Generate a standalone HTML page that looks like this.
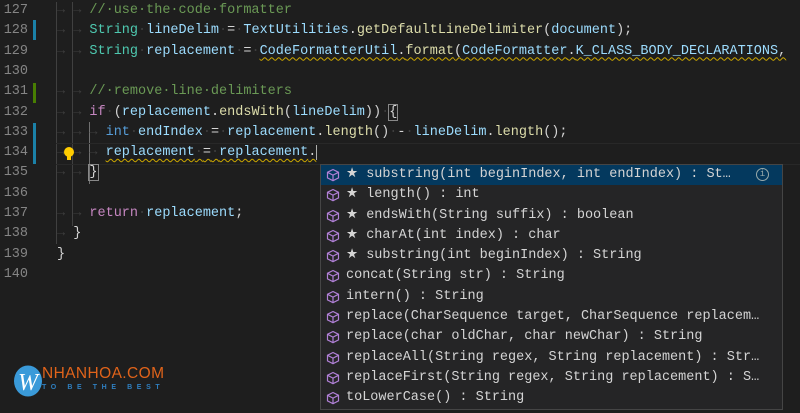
<!DOCTYPE html>
<html><head><style>
body{margin:0;width:800px;height:411px;background:#1e1e1e;overflow:hidden;position:relative;font-family:"Liberation Mono",monospace;font-size:13.5px}
.ln{position:absolute;left:0;width:28px;text-align:right;color:#858585;height:20.3px;line-height:20.3px}
.c{position:absolute;left:57px;white-space:pre;color:#d4d4d4;height:20.3px;line-height:20.3px}
.d{color:#3e3e3e}
.cm{color:#6a9955}.ty{color:#4ec9b0}.v{color:#9cdcfe}.f{color:#dcdcaa}.k{color:#c586c0}.kw{color:#569cd6}
.sq{text-decoration:underline wavy #cca700;text-underline-offset:3px;text-decoration-thickness:1px}
.bar{position:absolute;left:33px;width:3px;height:20px}
.g{position:absolute;width:1px;background:#404040}
#sug{position:absolute;left:320px;top:162px;width:461px;height:244px;background:#252526;border:1px solid #454545}
.r{height:20.3px;line-height:20.3px;white-space:pre;color:#d4d4d4;position:relative;padding-left:25px}
.r svg{position:absolute;left:5px;top:3px}
.sel{background:#04395e}
#ed{position:absolute;left:0;top:2px;width:800px;height:411px}
</style></head><body>
<div id="ed">
<div class="g" style="left:56px;top:0;height:242px"></div>
<div class="g" style="left:72px;top:0;height:224px"></div>
<div class="g" style="left:89px;top:120px;height:62px;background:#707070"></div>
<div style="position:absolute;left:56px;top:141px;width:744px;height:20px;border-top:1px solid #282828;border-bottom:1px solid #282828"></div>
<div class="bar" style="top:18px;background:#1b81a8;height:20px"></div>
<div class="bar" style="top:81px;background:#487e02"></div>
<div class="bar" style="top:121px;background:#1b81a8;height:41px"></div>

<div class="ln" style="top:-1px">127</div><div class="c" style="top:-1px"><span class="d">→ → </span><span class="cm">//·use·the·code·formatter</span></div>
<div class="ln" style="top:19.3px">128</div><div class="c" style="top:19.3px"><span class="d">→ → </span><span class="ty">String</span><span class="d">·</span><span class="v">lineDelim</span><span class="d">·</span>=<span class="d">·</span><span class="v">TextUtilities</span>.<span class="f">getDefaultLineDelimiter</span>(<span class="v">document</span>);</div>
<div class="ln" style="top:39.6px">129</div><div class="c" style="top:39.6px"><span class="d">→ → </span><span class="ty">String</span><span class="d">·</span><span class="v">replacement</span><span class="d">·</span>=<span class="d">·</span><span class="sq"><span class="v">CodeFormatterUtil</span>.<span class="f">format</span>(<span class="v">CodeFormatter</span>.<span class="v">K_CLASS_BODY_DECLARATIONS</span>,</span></div>
<div class="ln" style="top:59.9px">130</div>
<div class="ln" style="top:80.2px">131</div><div class="c" style="top:80.2px"><span class="d">→ → </span><span class="cm">//·remove·line·delimiters</span></div>
<div class="ln" style="top:100.5px">132</div><div class="c" style="top:100.5px"><span class="d">→ → </span><span class="k">if</span><span class="d">·</span>(<span class="v">replacement</span>.<span class="f">endsWith</span>(<span class="v">lineDelim</span>))<span class="d">·</span><span style="outline:1px solid #888">{</span></div>
<div class="ln" style="top:120.8px">133</div><div class="c" style="top:120.8px"><span class="d">→ → → </span><span class="kw">int</span><span class="d">·</span><span class="v">endIndex</span><span class="d">·</span>=<span class="d">·</span><span class="v">replacement</span>.<span class="f">length</span>()<span class="d">·</span>-<span class="d">·</span><span class="v">lineDelim</span>.<span class="f">length</span>();</div>
<div class="ln" style="top:141.1px">134</div><div class="c" style="top:141.1px"><span class="d">→ → → </span><span class="sq"><span class="v">replacement</span><span class="d">·</span>=<span class="d">·</span><span class="v">replacement</span>.</span><span style="border-left:1px solid #aeafad"></span></div>
<svg style="position:absolute;left:62px;top:144px" width="14" height="16" viewBox="0 0 14 16"><circle cx="7" cy="6" r="5" fill="#ffcc00"/><rect x="5" y="10" width="4" height="4" fill="#ffcc00"/></svg>
<div class="ln" style="top:161.4px">135</div><div class="c" style="top:161.4px"><span class="d">→ → </span><span style="outline:1px solid #888">}</span></div>
<div class="ln" style="top:181.7px">136</div>
<div class="ln" style="top:202px">137</div><div class="c" style="top:202px"><span class="d">→ → </span><span class="k">return</span><span class="d">·</span><span class="v">replacement</span>;</div>
<div class="ln" style="top:222.3px">138</div><div class="c" style="top:222.3px"><span class="d">→ </span>}</div>
<div class="ln" style="top:242.6px">139</div><div class="c" style="top:242.6px">}</div>
<div class="ln" style="top:262.9px">140</div>

<div id="sug">
<div class="r sel">★ substring(int beginIndex, int endIndex) : St…<span style="position:absolute;left:435px;top:3px;width:11px;height:11px;border:1px solid #9aa;border-radius:50%;font-size:9px;line-height:11px;text-align:center;color:#9aa">i</span></div>
<div class="r">★ length() : int</div>
<div class="r">★ endsWith(String suffix) : boolean</div>
<div class="r">★ charAt(int index) : char</div>
<div class="r">★ substring(int beginIndex) : String</div>
<div class="r">concat(String str) : String</div>
<div class="r">intern() : String</div>
<div class="r">replace(CharSequence target, CharSequence replacem…</div>
<div class="r">replace(char oldChar, char newChar) : String</div>
<div class="r">replaceAll(String regex, String replacement) : Str…</div>
<div class="r">replaceFirst(String regex, String replacement) : S…</div>
<div class="r">toLowerCase() : String</div>
</div>
</div>
<script>
document.querySelectorAll('#sug .r').forEach(function(r){r.insertAdjacentHTML('afterbegin','<svg width="14" height="14" viewBox="0 0 14 14" fill="none" stroke="#b180d7" stroke-width="1.2"><path d="M7 1.5L12.5 4.3V9.9L7 12.7L1.5 9.9V4.3Z"/><path d="M1.5 4.3L7 7.1L12.5 4.3M7 7.1V12.7"/></svg>');});
</script>

<svg style="position:absolute;left:13px;top:365px" width="30" height="32"><ellipse cx="15" cy="16" rx="14" ry="15.5" fill="#3a9ad9"/><text x="15" y="25" font-family="Liberation Serif" font-style="italic" font-size="24" fill="#fff" text-anchor="middle">W</text></svg>
<div style="position:absolute;left:42px;top:365px;font-family:'Liberation Sans',sans-serif;font-size:15.5px;color:#e0631a;letter-spacing:0.4px">NHANHOA.COM</div>
<div style="position:absolute;left:42px;top:384px;font-family:'Liberation Sans',sans-serif;font-size:7px;color:#2f7fc0;letter-spacing:4.6px;font-weight:bold">TO BE THE BEST</div>
</body></html>
